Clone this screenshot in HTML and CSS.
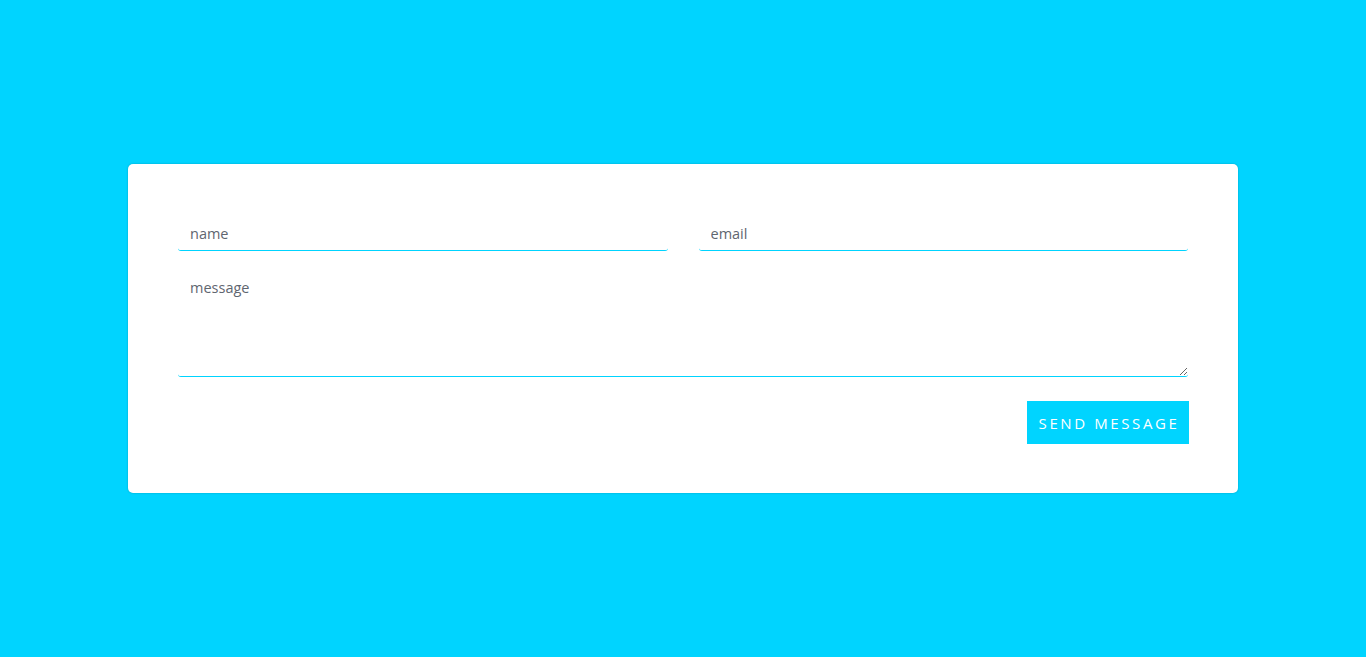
FILE: index.html
```html
<!DOCTYPE html>
<html>
<head>
<meta charset="utf-8">
<link rel="stylesheet" href="styles.css">
</head>
<body>
<div class="page">
  <form class="card">
    <div class="row">
      <input class="field" type="text" placeholder="name">
      <input class="field" type="text" placeholder="email">
    </div>
    <textarea class="field area" placeholder="message"></textarea>
    <div class="actions">
      <button type="button" class="send">SEND MESSAGE</button>
    </div>
  </form>
</div>
</body>
</html>
```
FILE: styles.css
```css
* { box-sizing: border-box; }
html, body { margin: 0; height: 100%; }
body {
  background: #00d4ff;
  font-family: "Open Sans", "Noto Sans", sans-serif;
}
.page {
  height: 657px;
  padding-top: 164px;
  display: flex;
  justify-content: center;
  align-items: flex-start;
}
.card {
  width: 1110px;
  background: #fff;
  border-radius: 5px;
  box-shadow: 0 0 2px rgba(0,0,0,0.25);
  padding: 49px 50px 49px 50px;
  display: flex;
  flex-direction: column;
}
.row {
  display: flex;
  gap: 31px;
}
.field {
  flex: 1;
  min-width: 0;
  border: none;
  border-bottom: 1px solid #00d4ff;
  border-radius: 0 0 3px 3px;
  font-family: inherit;
  font-size: 14.5px;
  color: #555;
  padding: 10px 12px 6px;
  height: 38px;
  outline: none;
  background: transparent;
}
.field::placeholder { color: #5f6670; }
.area {
  margin-top: 16px;
  height: 110px;
  width: 100%;
  flex: none;
  resize: vertical;
  padding-top: 11px;
}
.actions {
  display: flex;
  justify-content: flex-end;
  margin-top: 24px;
}
.send {
  background: #00d4ff;
  color: #fff;
  border: none;
  font-family: inherit;
  font-size: 15px;
  letter-spacing: 2.6px;
  width: 162px;
  height: 43px;
  padding: 0 0 0 2px;
  margin-right: -1px;
  cursor: pointer;
}
```
